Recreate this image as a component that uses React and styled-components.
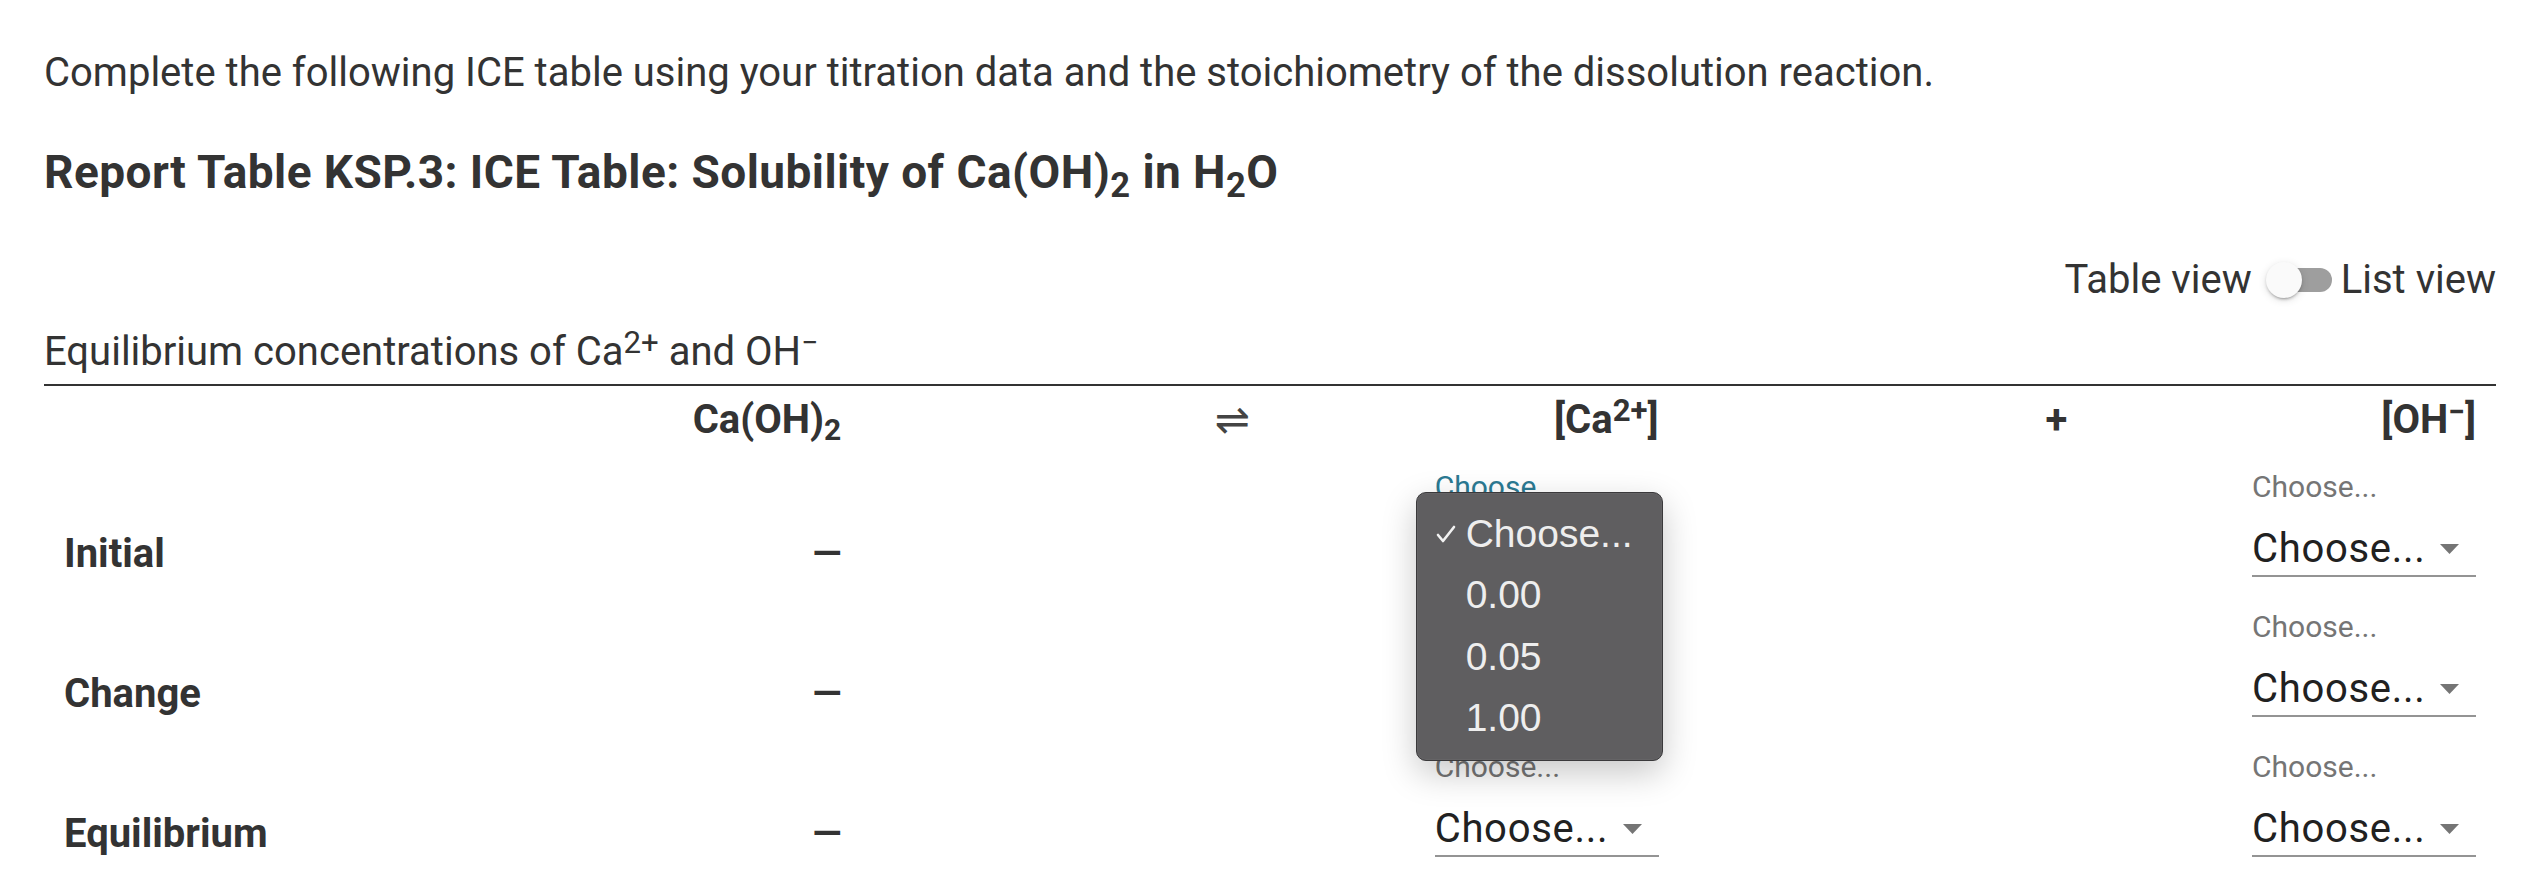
import React from 'react';
import styled, { createGlobalStyle } from 'styled-components';

const GlobalStyle = createGlobalStyle`
  body {
    margin: 0;
    background: #ffffff;
    font-family: Roboto, "Liberation Sans", sans-serif;
    color: #333333;
  }
`;

const Page = styled.div`
  padding: 44px 36px 0 44px;
`;

const Intro = styled.p`
  margin: 0;
  font-size: 40px;
  line-height: 57.6px;
`;

const Heading = styled.h2`
  margin: 44px 0 0;
  font-size: 46px;
  letter-spacing: 0.45px;
  line-height: 53.76px;
  font-weight: 700;
`;

const Sub = styled.sub`
  font-size: 0.75em;
  line-height: 0;
  vertical-align: ${(p) => p.$drop || '-0.27em'};
`;

const Sup = styled.sup`
  font-size: ${(p) => p.$size || '0.75em'};
  line-height: 0;
  vertical-align: ${(p) => p.$rise || '0.4em'};
`;

/* Table / list view toggle */
const ToggleRow = styled.div`
  margin-top: 51.6px;
  display: flex;
  justify-content: flex-end;
  align-items: center;
  font-size: 40px;
  line-height: 57.6px;
`;

const Switch = styled.span`
  position: relative;
  flex: none;
  width: 66px;
  height: 36px;
  margin: 0 9px 0 14px;
`;

const Track = styled.span`
  position: absolute;
  left: 10px;
  top: 6px;
  width: 56px;
  height: 24px;
  border-radius: 12px;
  background: #9e9e9e;
`;

const Thumb = styled.span`
  position: absolute;
  left: 0;
  top: 0;
  width: 36px;
  height: 36px;
  border-radius: 50%;
  background: #fafafa;
  box-shadow: 0 3px 2px -2px rgba(0, 0, 0, 0.2), 0 2px 3px rgba(0, 0, 0, 0.14),
    0 2px 8px rgba(0, 0, 0, 0.12);
`;

/* ICE table */
const Caption = styled.div`
  margin-top: 14.4px;
  font-size: 40px;
  line-height: 57.6px;
  padding-bottom: 3px;
  border-bottom: 2px solid #333333;
`;

const Grid = styled.div`
  display: grid;
  grid-template-columns: repeat(6, 1fr);
  grid-template-rows: 62px repeat(3, 140px);
`;

const HeadCell = styled.div`
  padding: 5.5px 20px 0;
  text-align: right;
  font-weight: 700;
  font-size: 40px;
  line-height: 57.6px;
`;

const Arrows = styled.span`
  font-family: "DejaVu Sans", sans-serif;
  font-weight: 400;
  font-size: 42px;
  color: #444444;
`;

const Cell = styled.div`
  align-self: end;
  padding: 0 20px 4.5px;
  display: flex;
  justify-content: ${(p) => (p.$left ? 'flex-start' : 'flex-end')};
`;

const RowLabel = styled.span`
  font-weight: 700;
  font-size: 40px;
  line-height: 57.6px;
`;

const Dash = styled.span`
  font-weight: 700;
  font-size: 38px;
  line-height: 57.6px;
`;

const Field = styled.div`
  position: relative;
  width: 224px;
  margin-bottom: 5.6px;
`;

const FieldLabel = styled.div`
  font-size: 30px;
  line-height: 28.8px;
  color: ${(p) => (p.$focused ? '#2b7a93' : '#757575')};
  white-space: nowrap;
`;

const SelectBox = styled.div`
  margin-top: 24.3px;
  display: flex;
  align-items: center;
  justify-content: space-between;
  padding: 0 17px 3.6px 0;
  border-bottom: 2px solid #949494;
  font-size: 40px;
  letter-spacing: 0.7px;
  line-height: 46px;
  color: #212121;
`;

/* native select popup, drawn open over the first [Ca2+] field */
const Menu = styled.ul`
  position: absolute;
  left: -19px;
  top: 19.2px;
  z-index: 2;
  width: 247px;
  box-sizing: border-box;
  margin: 0;
  padding: 10px 0 12px;
  list-style: none;
  background: #5f5e60;
  border: 1px solid #3a393b;
  border-radius: 10px;
  box-shadow: 0 12px 34px rgba(0, 0, 0, 0.22), 0 0 0 1px rgba(255, 255, 255, 0.04) inset;
  font-family: "Liberation Sans", Arial, sans-serif;
  font-size: 39px;
  line-height: 61.3px;
  color: #eeeeee;
`;

const MenuItem = styled.li`
  display: flex;
  align-items: center;
  padding-left: 19px;
`;

const CheckSlot = styled.span`
  display: flex;
  align-items: center;
  width: 30px;
  flex: none;
`;

function DropArrow() {
  return (
    <svg width="19" height="10" viewBox="0 0 19 10">
      <polygon points="0,0 19,0 9.5,10" fill="#757575" />
    </svg>
  );
}

function Check() {
  return (
    <svg width="20" height="18" viewBox="0 0 20 18">
      <polyline
        points="2,10 7,16 18,2"
        fill="none"
        stroke="#f2f2f2"
        strokeWidth="2.6"
        strokeLinecap="round"
        strokeLinejoin="round"
      />
    </svg>
  );
}

function SelectField({ focused, open }) {
  const options = ['Choose...', '0.00', '0.05', '1.00'];
  return (
    <Field>
      <FieldLabel $focused={focused}>Choose...</FieldLabel>
      <SelectBox>
        <span>Choose...</span>
        <DropArrow />
      </SelectBox>
      {open && (
        <Menu>
          {options.map((o, i) => (
            <MenuItem key={o}>
              <CheckSlot>{i === 0 && <Check />}</CheckSlot>
              {o}
            </MenuItem>
          ))}
        </Menu>
      )}
    </Field>
  );
}

const rows = ['Initial', 'Change', 'Equilibrium'];

export default function App() {
  return (
    <Page>
      <GlobalStyle />
      <Intro>
        Complete the following ICE table using your titration data and the
        stoichiometry of the dissolution reaction.
      </Intro>
      <Heading>
        Report Table KSP.3: ICE Table: Solubility of Ca(OH)<Sub>2</Sub> in H
        <Sub>2</Sub>O
      </Heading>

      <ToggleRow>
        <span>Table view</span>
        <Switch>
          <Track />
          <Thumb />
        </Switch>
        <span>List view</span>
      </ToggleRow>

      <Caption>
        Equilibrium concentrations of Ca<Sup $size="0.78em">2+</Sup> and OH
        <Sup>−</Sup>
      </Caption>
      <Grid>
        <HeadCell />
        <HeadCell>
          Ca(OH)<Sub $drop="-0.23em">2</Sub>
        </HeadCell>
        <HeadCell>
          <Arrows>⇌</Arrows>
        </HeadCell>
        <HeadCell>
          [Ca<Sup $size="0.78em" $rise="0.38em">2+</Sup>]
        </HeadCell>
        <HeadCell>+</HeadCell>
        <HeadCell>
          [OH<Sup $rise="0.36em">−</Sup>]
        </HeadCell>

        {rows.map((r, i) => (
          <React.Fragment key={r}>
            <Cell $left>
              <RowLabel>{r}</RowLabel>
            </Cell>
            <Cell>
              <Dash>—</Dash>
            </Cell>
            <Cell />
            <Cell>
              <SelectField focused={i === 0} open={i === 0} />
            </Cell>
            <Cell />
            <Cell>
              <SelectField />
            </Cell>
          </React.Fragment>
        ))}
      </Grid>
    </Page>
  );
}
